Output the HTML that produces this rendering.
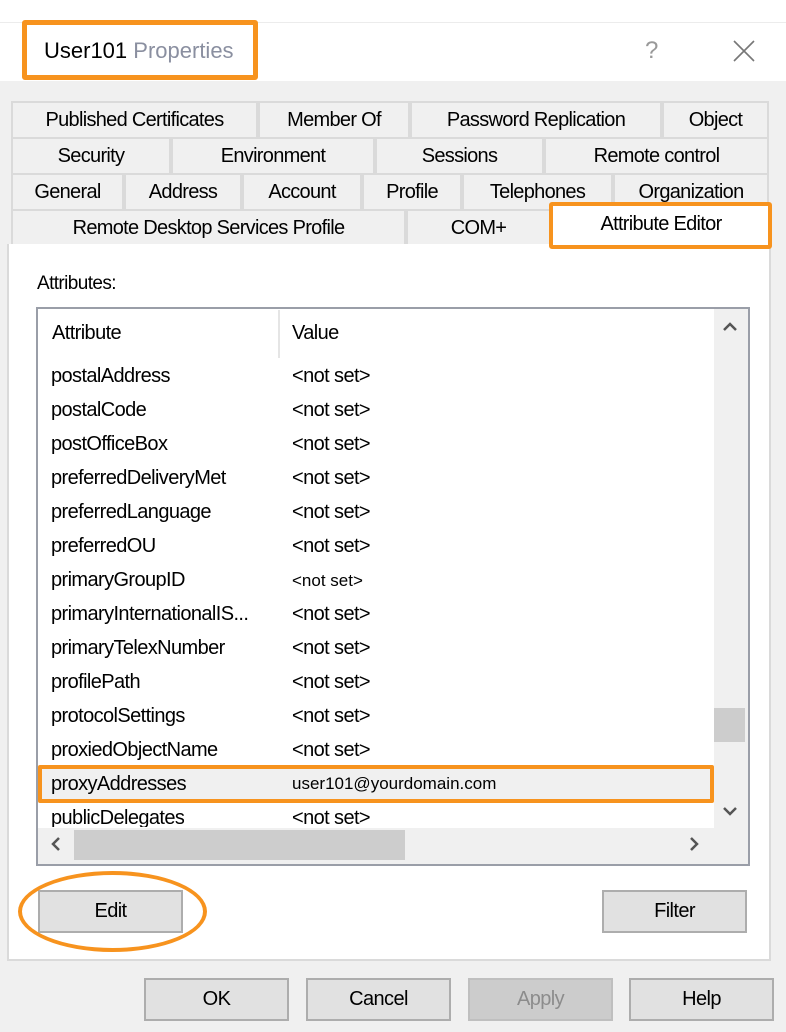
<!DOCTYPE html>
<html><head><style>
body{margin:0;width:786px;height:1032px;background:#f0f0f0;position:relative;overflow:hidden;font-family:"Liberation Sans",sans-serif;color:#000}
.a{position:absolute;box-sizing:border-box}
.t{position:absolute;box-sizing:border-box;border:2px solid #dadada;border-bottom:none;background:#f0f0f0;font-size:20px;letter-spacing:-0.7px;text-align:center;line-height:34px;height:36px}
.r{position:absolute;font-size:20px;letter-spacing:-0.6px;line-height:34px;height:34px}
.b{position:absolute;box-sizing:border-box;border:2px solid #adadad;background:#e1e1e1;font-size:20px;letter-spacing:-0.6px;text-align:center;line-height:38px;height:43px;width:145px}
</style></head><body>
<div class="a" style="left:0;top:0;width:786px;height:81px;background:#fff"></div>
<div class="a" style="left:0;top:22px;width:786px;height:1px;background:#ececec"></div>
<div class="a" style="left:22px;top:20px;width:236px;height:60px;border:5px solid #f7931e;border-radius:3px"></div>
<div class="a" style="left:44px;top:36px;font-size:22px;line-height:30px">User101 <span style="color:#8a8fa0">Properties</span></div>
<div class="a" style="left:645px;top:36px;font-size:24px;color:#999;line-height:30px">?</div>
<svg class="a" style="left:733px;top:40px" width="22" height="22"><path d="M1 1L21 21M21 1L1 21" stroke="#777" stroke-width="1.6"/></svg>

<div class="t" style="left:11px;top:101px;width:247px">Published Certificates</div>
<div class="t" style="left:258px;top:101px;width:152px">Member Of</div>
<div class="t" style="left:410px;top:101px;width:252px">Password Replication</div>
<div class="t" style="left:662px;top:101px;width:107px">Object</div>
<div class="t" style="left:11px;top:137px;width:160px">Security</div>
<div class="t" style="left:171px;top:137px;width:204px">Environment</div>
<div class="t" style="left:375px;top:137px;width:169px">Sessions</div>
<div class="t" style="left:544px;top:137px;width:225px">Remote control</div>
<div class="t" style="left:11px;top:173px;width:113px">General</div>
<div class="t" style="left:124px;top:173px;width:118px">Address</div>
<div class="t" style="left:242px;top:173px;width:120px">Account</div>
<div class="t" style="left:362px;top:173px;width:100px">Profile</div>
<div class="t" style="left:462px;top:173px;width:151px">Telephones</div>
<div class="t" style="left:613px;top:173px;width:156px">Organization</div>
<div class="t" style="left:11px;top:209px;width:395px">Remote Desktop Services Profile</div>
<div class="t" style="left:406px;top:209px;width:145px">COM+</div>

<div class="a" style="left:7px;top:244px;width:764px;height:717px;background:#fff;border:2px solid #dadada;border-top:none"></div>
<div class="a" style="left:552px;top:205px;width:218px;height:42px;background:#fff"></div>
<div class="a" style="left:549px;top:202px;width:223px;height:47px;border:4px solid #f7931e;border-radius:3px"></div>
<div class="a" style="left:552px;top:207px;width:218px;text-align:center;font-size:20px;letter-spacing:-0.7px;line-height:34px">Attribute Editor</div>

<div class="a" style="left:37px;top:270px;font-size:19px;letter-spacing:-0.6px;line-height:28px">Attributes:</div>
<div class="a" style="left:36px;top:307px;width:714px;height:559px;border:2px solid #9a9ea8;background:#fff"></div>
<div class="a" style="left:278px;top:310px;width:2px;height:48px;background:#e5e5e5"></div>
<div class="r" style="left:52px;top:316px">Attribute</div>
<div class="r" style="left:292px;top:316px">Value</div>
<div class="a" style="left:714px;top:309px;width:34px;height:519px;background:#f0f0f0"></div>
<div class="a" style="left:714px;top:708px;width:31px;height:34px;background:#cdcdcd"></div>
<svg class="a" style="left:722px;top:321px" width="16" height="12"><path d="M2 9L8 3L14 9" stroke="#555" stroke-width="2.5" fill="none"/></svg>
<svg class="a" style="left:722px;top:805px" width="16" height="12"><path d="M2 3L8 9L14 3" stroke="#555" stroke-width="2.5" fill="none"/></svg>
<div class="a" style="left:38px;top:828px;width:710px;height:36px;background:#f0f0f0"></div>
<div class="a" style="left:74px;top:830px;width:331px;height:30px;background:#cdcdcd"></div>
<svg class="a" style="left:50px;top:836px" width="12" height="16"><path d="M9 2L3 8L9 14" stroke="#555" stroke-width="2.5" fill="none"/></svg>
<svg class="a" style="left:688px;top:836px" width="12" height="16"><path d="M3 2L9 8L3 14" stroke="#555" stroke-width="2.5" fill="none"/></svg>

<div class="a" style="left:38px;top:767px;width:676px;height:34px;background:#f0f0f0"></div>
<div class="r" style="left:51px;top:359px">postalAddress</div><div class="r" style="left:292px;top:359px">&lt;not set&gt;</div>
<div class="r" style="left:51px;top:393px">postalCode</div><div class="r" style="left:292px;top:393px">&lt;not set&gt;</div>
<div class="r" style="left:51px;top:427px">postOfficeBox</div><div class="r" style="left:292px;top:427px">&lt;not set&gt;</div>
<div class="r" style="left:51px;top:461px">preferredDeliveryMet</div><div class="r" style="left:292px;top:461px">&lt;not set&gt;</div>
<div class="r" style="left:51px;top:495px">preferredLanguage</div><div class="r" style="left:292px;top:495px">&lt;not set&gt;</div>
<div class="r" style="left:51px;top:529px">preferredOU</div><div class="r" style="left:292px;top:529px">&lt;not set&gt;</div>
<div class="r" style="left:51px;top:563px">primaryGroupID</div><div class="r" style="left:292px;top:564px;font-size:17px;letter-spacing:0">&lt;not set&gt;</div>
<div class="r" style="left:51px;top:597px">primaryInternationalIS...</div><div class="r" style="left:292px;top:597px">&lt;not set&gt;</div>
<div class="r" style="left:51px;top:631px">primaryTelexNumber</div><div class="r" style="left:292px;top:631px">&lt;not set&gt;</div>
<div class="r" style="left:51px;top:665px">profilePath</div><div class="r" style="left:292px;top:665px">&lt;not set&gt;</div>
<div class="r" style="left:51px;top:699px">protocolSettings</div><div class="r" style="left:292px;top:699px">&lt;not set&gt;</div>
<div class="r" style="left:51px;top:733px">proxiedObjectName</div><div class="r" style="left:292px;top:733px">&lt;not set&gt;</div>
<div class="r" style="left:51px;top:767px">proxyAddresses</div><div class="r" style="left:292px;top:767px;font-size:17px;letter-spacing:0">user101@yourdomain.com</div>
<div class="r" style="left:51px;top:801px;height:26px;overflow:hidden">publicDelegates</div><div class="r" style="left:292px;top:801px;height:26px;overflow:hidden">&lt;not set&gt;</div>
<div class="a" style="left:38px;top:765px;width:676px;height:38px;border:4px solid #f7931e;border-radius:2px"></div>

<div class="b" style="left:38px;top:890px">Edit</div>
<div class="a" style="left:18px;top:871px;width:189px;height:81px;border:4px solid #f7931e;border-radius:50%"></div>
<div class="b" style="left:602px;top:890px">Filter</div>

<div class="b" style="left:144px;top:978px">OK</div>
<div class="b" style="left:306px;top:978px">Cancel</div>
<div class="b" style="left:468px;top:978px;background:#cccccc;border-color:#bfbfbf;color:#8c8c8c">Apply</div>
<div class="b" style="left:629px;top:978px">Help</div>
</body></html>
